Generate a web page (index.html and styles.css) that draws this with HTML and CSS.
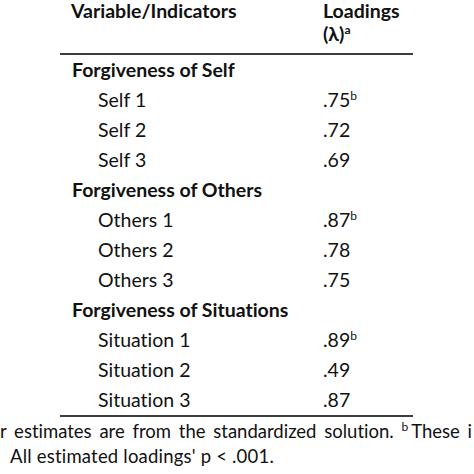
FILE: index.html
```html
<!DOCTYPE html>
<html>
<head>
<meta charset="utf-8">
<link rel="stylesheet" href="styles.css">
</head>
<body>
<div class="tbl">
  <div class="head">
    <div class="c1"><span class="l1">Variable/Indicators</span></div>
    <div class="c2"><span class="l1">Loadings</span><span class="l2">(λ)<sup>a</sup></span></div>
  </div>
  <div class="rows">
    <div class="row group"><div class="c1">Forgiveness of Self</div><div class="c2"></div></div>
    <div class="row item"><div class="c1">Self 1</div><div class="c2">.75<sup>b</sup></div></div>
    <div class="row item"><div class="c1">Self 2</div><div class="c2">.72</div></div>
    <div class="row item"><div class="c1">Self 3</div><div class="c2">.69</div></div>
    <div class="row group"><div class="c1">Forgiveness of Others</div><div class="c2"></div></div>
    <div class="row item"><div class="c1">Others 1</div><div class="c2">.87<sup>b</sup></div></div>
    <div class="row item"><div class="c1">Others 2</div><div class="c2">.78</div></div>
    <div class="row item"><div class="c1">Others 3</div><div class="c2">.75</div></div>
    <div class="row group"><div class="c1">Forgiveness of Situations</div><div class="c2"></div></div>
    <div class="row item"><div class="c1">Situation 1</div><div class="c2">.89<sup>b</sup></div></div>
    <div class="row item"><div class="c1">Situation 2</div><div class="c2">.49</div></div>
    <div class="row item"><div class="c1">Situation 3</div><div class="c2">.87</div></div>
  </div>
</div>
<div class="note">
  <div class="line1">r estimates are from the standardized solution. <sup>b</sup>These i</div>
  <div class="line2">All estimated loadings' p &lt; .001.</div>
</div>
</body>
</html>
```

FILE: styles.css
```css
html, body {
  margin: 0;
  padding: 0;
  background: #fff;
  overflow: hidden;
}
body {
  font-family: Lato, "Open Sans", sans-serif;
  font-variant-ligatures: none;
  color: #111;
  width: 474px;
  height: 474px;
}
.tbl {
  margin-left: 60px;
  width: 353px;
}
.head, .row {
  display: grid;
  grid-template-columns: 263px 1fr;
}
.head {
  font-size: 19.5px;
  font-weight: 700;
  padding-top: 1px;
  padding-bottom: 5px;
  border-bottom: 2px solid #3c3c3c;
}
.head .l1, .head .l2 { display: block; }
.head .l1 { line-height: 19px; }
.head .l2 { line-height: 28px; }
.head .c1 { padding-left: 11px; }
.rows {
  border-bottom: 2px solid #3c3c3c;
}
.row {
  height: 30px;
  line-height: 30px;
  font-size: 19.5px;
  white-space: nowrap;
}
.group .c1 {
  padding-left: 12px;
  font-weight: 700;
}
.item .c1 { padding-left: 38px; }
sup {
  font-size: 12px;
  font-weight: 400;
  line-height: 0;
  vertical-align: 7px;
}
.head sup { font-weight: 700; }
.note {
  font-size: 18.5px;
  line-height: 25px;
  padding-top: 2px;
  white-space: nowrap;
}
.line1 {
  width: 472px;
  white-space: normal;
  text-align: justify;
  text-align-last: justify;
}
.line1 sup { margin-right: 3px; }
.line2 { padding-left: 10px; letter-spacing: 0.2px; }
```
